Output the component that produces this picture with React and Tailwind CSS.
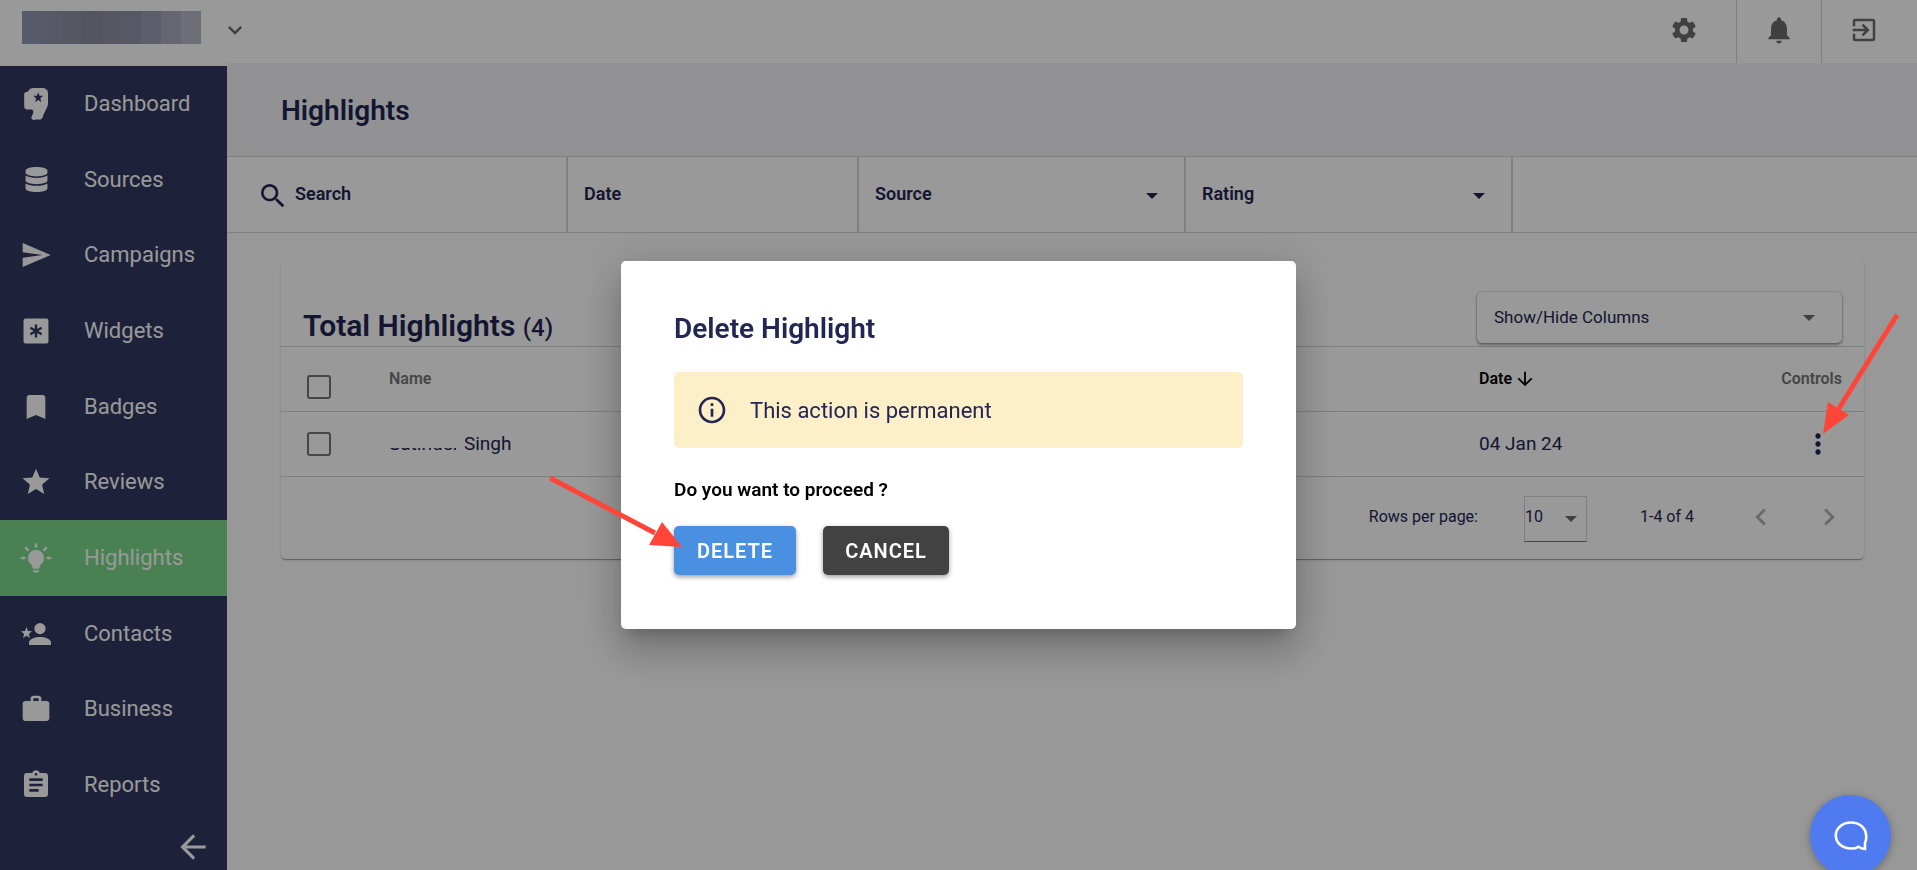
import { FaDatabase } from "react-icons/fa";
import {
  MdArrowBack,
  MdArrowDownward,
  MdAssignment,
  MdBookmark,
  MdChevronLeft,
  MdChevronRight,
  MdExitToApp,
  MdInfoOutline,
  MdKeyboardArrowDown,
  MdMoreVert,
  MdNotifications,
  MdSearch,
  MdSend,
  MdSettings,
  MdStar,
  MdWork,
} from "react-icons/md";

const FONT = "font-['Roboto','Liberation_Sans',sans-serif]";

function ThumbIcon() {
  return (
    <svg viewBox="0 0 24 32" className="w-6 h-8" fill="currentColor">
      <path
        fillRule="evenodd"
        d="M6 1C7 .2 8.500 0 10 0H18C21.500 0 24 2 24 5V15C24 17 23.500 18.500 22.500 20.500L19.500 26.500C19 28 18.800 30 17.500 31C16 32.300 13.500 31 12 31.500C9.500 32.500 7.500 31.500 7.300 29.500L9 25.500C9.500 24 9.500 22.500 8 21.500H3.500C1.500 21.500 .2 20.300 .2 18.500V7C0 4.500 1.500 3.600 3.800 3.800C4.300 2.500 5 1.600 6 1ZM14.200 4.300L12.900 7.800H9.200L12.100 10.200L11.100 14L14.200 11.900L17.300 14L16.300 10.200L19.200 7.800H15.500Z"
      />
    </svg>
  );
}

function AsteriskBoxIcon() {
  return (
    <svg viewBox="0 0 24 24" className="w-[26px] h-[26px]">
      <rect x="0.500" y="0.500" width="23" height="23" rx="2" fill="currentColor" />
      <path
        d="M12 6V18M6.800 9L17.200 15M17.200 9L6.800 15"
        stroke="#323762"
        strokeWidth="2.200"
      />
    </svg>
  );
}

function BulbIcon() {
  return (
    <svg viewBox="0 0 24 24" className="w-8 h-8" fill="currentColor">
      <path d="M12 6a6 6 0 0 1 3.400 10.900L14.600 19.500a.8.8 0 0 1-.8.600H10.200a.8.8 0 0 1-.8-.6L8.600 16.900A6 6 0 0 1 12 6ZM9.800 21.200h4.400v.6a1 1 0 0 1-1 1h-2.400a1 1 0 0 1-1-1Z" />
      <path
        d="M12 2V3.400M1.500 12H3.200M20.800 12H22.500M4.600 4.600L5.900 5.900M19.400 4.600L18.100 5.900"
        stroke="currentColor"
        strokeWidth="2"
        strokeLinecap="round"
      />
    </svg>
  );
}

function ContactStarIcon() {
  return (
    <svg viewBox="0 0 30 22" className="w-[30px] h-[22px]" fill="currentColor">
      <circle cx="19" cy="5.600" r="5.600" />
      <path d="M8 22V19.500C8 16 14 14 19 14S30 16 30 19.500V22Z" />
      <path d="M5.500 4L7 8L11 8.300L7.900 10.900L9 15L5.500 12.700L2 15L3.100 10.900L0 8.300L4 8Z" />
    </svg>
  );
}

function Caret({ className = "" }) {
  return (
    <svg
      viewBox="0 0 12 6"
      className={`absolute w-3 h-1.5 pointer-events-none ${className}`}
      fill="currentColor"
    >
      <path d="M0 0H12L6 6Z" />
    </svg>
  );
}

const NAV_ITEMS = [
  { label: "Dashboard", icon: <ThumbIcon /> },
  { label: "Sources", icon: <FaDatabase size={25} /> },
  { label: "Campaigns", icon: <MdSend size={32} /> },
  { label: "Widgets", icon: <AsteriskBoxIcon /> },
  { label: "Badges", icon: <MdBookmark size={32} /> },
  { label: "Reviews", icon: <MdStar size={32} /> },
  { label: "Highlights", icon: <BulbIcon />, active: true },
  { label: "Contacts", icon: <ContactStarIcon /> },
  { label: "Business", icon: <MdWork size={32} /> },
  { label: "Reports", icon: <MdAssignment size={32} /> },
];

// Blurred account name, one shade per tile
const TILES = [
  "bg-[#9398b4]",
  "bg-[#9295ab]",
  "bg-[#8e91a6]",
  "bg-[#8c8f9f]",
  "bg-[#8f92a4]",
  "bg-[#9093a8]",
  "bg-[#9a9db3]",
  "bg-[#a8abbb]",
  "bg-[#b6b7c6]",
];

function TopBar() {
  return (
    <header className="h-[63px] flex items-stretch bg-white text-[#6b6b6b]">
      <div className="flex items-center gap-5 pl-[22px] pb-2">
        <div className="w-[179px] h-[33px] flex" aria-hidden="true">
          {TILES.map((tile) => (
            <span key={tile} className={`flex-1 ${tile}`} />
          ))}
        </div>
        <button aria-label="Switch account" className="pt-1">
          <MdKeyboardArrowDown size={28} />
        </button>
      </div>
      <div className="ml-auto flex">
        <button aria-label="Settings" className="w-[105px] flex items-center justify-center pb-1">
          <MdSettings size={30} />
        </button>
        <button
          aria-label="Notifications"
          className="w-[85px] flex items-center justify-center pb-1 border-l border-[#d5d5d5]"
        >
          <MdNotifications size={32} />
        </button>
        <button
          aria-label="Log out"
          className="w-24 flex items-center justify-center pb-1 pr-3 border-l border-[#d5d5d5]"
        >
          <MdExitToApp size={30} />
        </button>
      </div>
    </header>
  );
}

function Sidebar() {
  return (
    <aside className="w-[227px] mt-[3px] shrink-0 flex flex-col bg-[#323762] text-white">
      <nav className="flex-1 flex flex-col">
        {NAV_ITEMS.map((item) => (
          <a
            key={item.label}
            href="#"
            className={`flex-1 flex items-center pl-4 text-[22px] leading-7 ${
              item.active ? "bg-[#7bd78a]" : ""
            }`}
          >
            <span className="w-10 mr-7 flex justify-center">{item.icon}</span>
            {item.label}
          </a>
        ))}
      </nav>
      <button aria-label="Collapse menu" className="h-[47px] self-end pr-[15px]">
        <MdArrowBack size={38} />
      </button>
    </aside>
  );
}

function FilterSelect({ label }) {
  return (
    <div className="relative w-[327px] border-r-2 border-[#d5d5d5]">
      <select
        aria-label={label}
        className="w-full h-full pl-4 pb-0.5 appearance-none font-semibold"
      >
        <option>{label}</option>
      </select>
      <Caret className="right-[26px] top-9" />
    </div>
  );
}

function Filters() {
  return (
    <div className="h-[77px] flex items-stretch bg-white border-y border-[#d5d5d5] text-[18px]">
      <label className="w-[341px] flex items-center pl-[30px] pt-0.5 border-r-2 border-[#d5d5d5]">
        <MdSearch size={32} className="shrink-0" />
        <input
          type="search"
          aria-label="Search"
          placeholder="Search"
          className="w-full min-w-0 pl-1.5 pb-1 font-semibold placeholder:text-[#222653]"
        />
      </label>
      <input
        type="text"
        aria-label="Date"
        placeholder="Date"
        className="w-[291px] pl-4 pb-0.5 font-semibold border-r-2 border-[#d5d5d5] placeholder:text-[#222653]"
      />
      <FilterSelect label="Source" />
      <FilterSelect label="Rating" />
    </div>
  );
}

function Checkbox({ label }) {
  return (
    <input
      type="checkbox"
      aria-label={label}
      className="block w-6 h-6 appearance-none border-2 border-[#757575] rounded-[3px]"
    />
  );
}

function HighlightsCard() {
  return (
    <section className="bg-white rounded-[5px] shadow-[0_2px_1px_-1px_rgba(0,0,0,0.2),0_1px_1px_0_rgba(0,0,0,0.14),0_1px_3px_0_rgba(0,0,0,0.12)]">
      <div className="h-[86px] flex items-end justify-between pl-[22px] pr-[22px]">
        <h2 className="text-[30px] leading-9 font-semibold">
          Total Highlights <span className="text-[24px] font-medium">(4)</span>
        </h2>
        <div className="relative w-[365px] h-[51px] mb-[3px] rounded-[5px] shadow-[0_2px_3px_0_rgba(0,0,0,0.35),0_0_2px_0_rgba(0,0,0,0.3)]">
          <select
            aria-label="Show/Hide Columns"
            className="w-full h-full pl-[17px] appearance-none text-[17px]"
          >
            <option>Show/Hide Columns</option>
          </select>
          <Caret className="right-[27px] top-[23px] text-[#6b6b6b]" />
        </div>
      </div>

      <table className="w-full table-fixed text-left">
        <thead>
          <tr className="h-[65px] border-y border-[#d5d5d5] text-[16px] text-[#757575]">
            <th className="w-[108px] pl-[26px] pt-4">
              <Checkbox label="Select all" />
            </th>
            <th className="font-semibold">Name</th>
            <th className="w-[220px] font-semibold text-black">
              <button className="flex items-center gap-0.5">
                Date <MdArrowDownward size={22} />
              </button>
            </th>
            <th className="w-[165px] pr-[22px] text-right font-semibold">Controls</th>
          </tr>
        </thead>
        <tbody>
          <tr className="h-[65px] border-b border-[#d5d5d5] text-[19px] leading-6">
            <td className="pl-[26px]">
              <Checkbox label="Select row" />
            </td>
            <td>
              {/* first name is masked */}
              <span className="relative">
                Satinder
                <span className="absolute -left-1 -right-1 top-0 h-4 bg-white" />
              </span>{" "}
              Singh
            </td>
            <td>04 Jan 24</td>
            <td className="pr-[30px]">
              <button aria-label="Row actions" className="block ml-auto">
                <MdMoreVert size={32} />
              </button>
            </td>
          </tr>
        </tbody>
      </table>

      <div className="h-[82px] flex items-center justify-end pr-[18px] pb-0.5 text-[16px]">
        <label htmlFor="rows">Rows per page:</label>
        <div className="relative w-[63px] h-[46px] ml-[46px] mt-1">
          <select
            id="rows"
            className="w-full h-full pb-1 appearance-none border border-[#d5d5d5] border-b-[#757575]"
          >
            <option>10</option>
          </select>
          <Caret className="right-2.5 top-5 text-[#6b6b6b]" />
        </div>
        <span className="ml-[53px]">1-4 of 4</span>
        <button aria-label="Previous page" className="ml-[50px] text-[#b0b0b0]">
          <MdChevronLeft size={34} />
        </button>
        <button aria-label="Next page" className="ml-[34px] text-[#b0b0b0]">
          <MdChevronRight size={34} />
        </button>
      </div>
    </section>
  );
}

function DeleteDialog() {
  return (
    <div className="fixed inset-0 z-10 flex items-center justify-center pt-5 bg-black/40">
      <div
        role="dialog"
        aria-modal="true"
        aria-labelledby="dialog-title"
        className="w-[675px] px-[53px] pt-12 pb-[54px] bg-white rounded-[5px] shadow-[0_11px_15px_-7px_rgba(0,0,0,0.2),0_24px_38px_3px_rgba(0,0,0,0.14),0_9px_46px_8px_rgba(0,0,0,0.12)]"
      >
        <h2 id="dialog-title" className="text-[28px] leading-10 font-semibold">
          Delete Highlight
        </h2>
        <div className="h-[76px] mt-[23px] flex items-center gap-[22px] px-[22px] rounded-[5px] bg-[#fdefc8] text-[22px]">
          <MdInfoOutline size={32} />
          This action is permanent
        </div>
        <p className="mt-7 text-[19px] leading-7 font-semibold text-black">
          Do you want to proceed ?
        </p>
        <div className="mt-[22px] flex gap-[27px] text-[20px] font-semibold text-white">
          <button className="w-[122px] h-[49px] rounded-[5px] bg-[#4a90e2] tracking-wider shadow-[0_2px_5px_rgba(0,0,0,0.4)]">
            DELETE
          </button>
          <button className="w-[126px] h-[49px] rounded-[5px] bg-[#424242] tracking-wider shadow-[0_2px_5px_rgba(0,0,0,0.4)]">
            CANCEL
          </button>
        </div>
      </div>
    </div>
  );
}

function Arrows() {
  return (
    <div className="fixed inset-0 z-30 pointer-events-none text-[#ff453a]">
      <svg
        viewBox="0 0 134 72"
        className="absolute left-[549px] top-[476px] w-[134px] h-[72px]"
        fill="currentColor"
      >
        <path d="M1 2L106 57" stroke="currentColor" strokeWidth="5" />
        <path d="M133 71L113 46L100 69Z" />
      </svg>
      <svg
        viewBox="0 0 78 122"
        className="absolute left-[1822px] top-[313px] w-[78px] h-[122px]"
        fill="currentColor"
      >
        <path d="M75 2L16 97" stroke="currentColor" strokeWidth="5" />
        <path d="M1 121L6 89L27 102Z" />
      </svg>
    </div>
  );
}

export default function App() {
  return (
    <div className={`min-h-screen flex flex-col bg-[#fdfdfd] text-[#222653] ${FONT}`}>
      <TopBar />
      <div className="flex-1 flex">
        <Sidebar />
        <main className="flex-1 min-w-0">
          <div className="h-[93px] flex items-center pl-[54px] pt-0.5 bg-[#f3f3f7]">
            <h1 className="text-[28px] leading-10 font-semibold">Highlights</h1>
          </div>
          <Filters />
          <div className="pt-[27px] pl-[54px] pr-[53px]">
            <HighlightsCard />
          </div>
        </main>
      </div>

      <DeleteDialog />

      <button
        aria-label="Open chat"
        className="fixed z-20 right-[26px] -bottom-[6px] w-[81px] h-[81px] flex items-center justify-center rounded-full bg-[#507bf0] text-white shadow-[0_2px_8px_rgba(0,0,0,0.3)]"
      >
        <svg viewBox="0 0 34 32" className="w-[34px] h-8" fill="none">
          <path
            d="M31 29V23C32.200 20.800 32.500 18.500 32.200 15.500C31.500 7.500 25.500 2.500 17 2.500S1.800 8 1.800 15.500S8.500 28.500 17 28.500C20 28.500 22.500 28 24.500 26.800C26.500 28.200 28.500 29 31 29Z"
            stroke="currentColor"
            strokeWidth="2.600"
          />
        </svg>
      </button>

      <Arrows />
    </div>
  );
}
